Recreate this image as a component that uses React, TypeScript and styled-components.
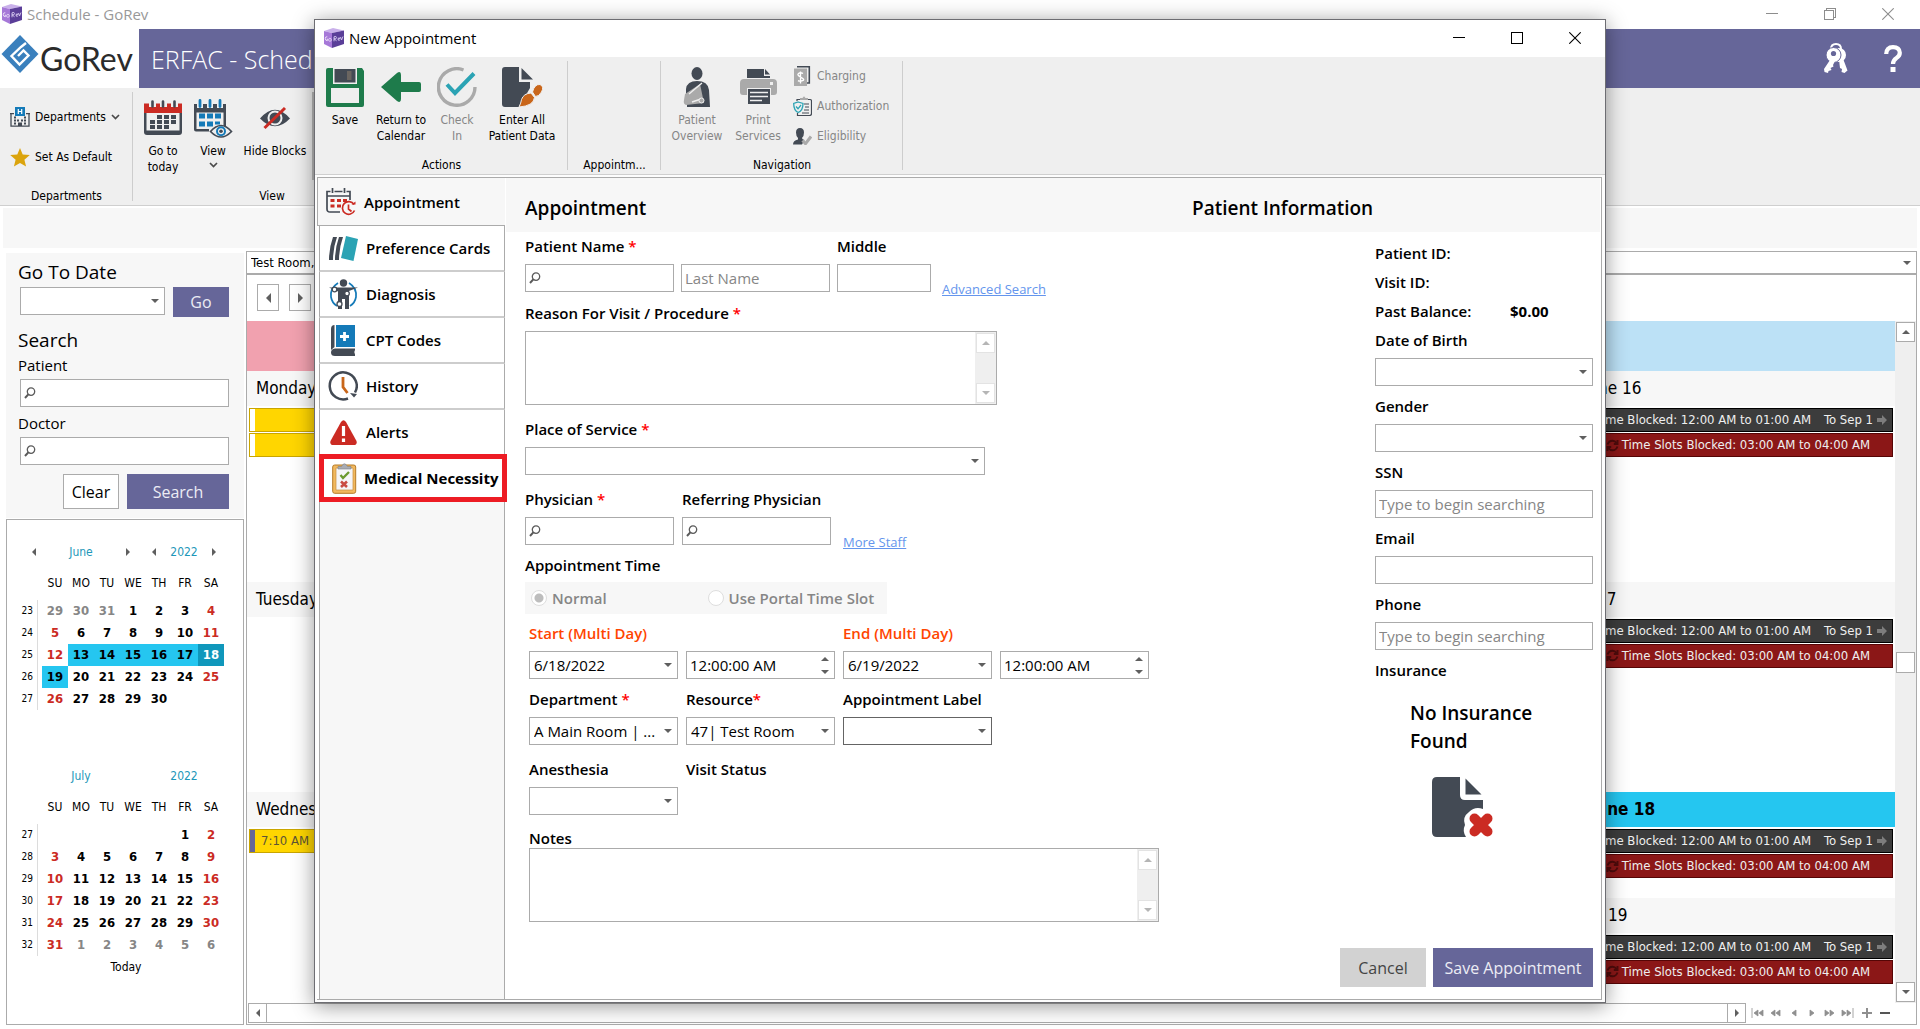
import React from "react";
import styled, { createGlobalStyle, css } from "styled-components";

const ui = `"Open Sans", "Noto Sans", sans-serif`;
const small = `"DejaVu Sans Condensed", "DejaVu Sans", sans-serif`;
const slate = "#434a54";
const purple = "#666699";
const line = "#ababab";
const green = "#1e7b4b";
const blue = "#147ab8";
const red = "#cb2b23";

const GlobalStyle = createGlobalStyle`
  *, *::before, *::after { box-sizing: border-box; }
  body { margin: 0; background: #fff; color: #000; font: 15px/20px ${ui}; overflow: hidden; }
  button, input, select, textarea { font: inherit; color: inherit; margin: 0; border-radius: 0; }
  button { padding: 0; border: 0; background: none; cursor: pointer; }
  h1, h2, p { margin: 0; font-weight: 400; }
  svg { display: block; flex: none; }
`;

/* ---------- shared parts ---------- */

const triangleSides = {
  up: ["top", "bottom"],
  down: ["bottom", "top"],
  left: ["left", "right"],
  right: ["right", "left"],
};

const Triangle = styled.span<{ $dir: keyof typeof triangleSides; $size?: number; $color?: string }>`
  display: block;
  flex: none;
  width: 0;
  height: 0;
  border: ${(p) => p.$size ?? 4}px solid transparent;
  ${(p) => css`
    border-${triangleSides[p.$dir][0]}: 0;
    border-${triangleSides[p.$dir][1]}-color: ${p.$color ?? "#5f5f5f"};
  `}
`;

const SelectFrame = styled.div<{ $width?: number; $dark?: boolean; $height?: number; $font?: string; $size?: number }>`
  display: flex;
  align-items: center;
  flex: none;
  width: ${(p) => (p.$width ? `${p.$width}px` : "100%")};
  height: ${(p) => p.$height ?? 28}px;
  padding-right: 5px;
  border: 1px solid ${(p) => (p.$dark ? "#646464" : line)};
  background: #fff;
  select {
    flex: 1;
    min-width: 0;
    height: 100%;
    padding: 0 0 0 4px;
    border: 0;
    outline: 0;
    appearance: none;
    background: none;
    font-family: ${(p) => p.$font ?? ui};
    font-size: ${(p) => p.$size ?? 15}px;
  }
`;

type PickProps = { id: string; width?: number; value?: string; dark?: boolean };
const Pick = ({ id, width, value = "", dark }: PickProps) => (
  <SelectFrame $width={width} $dark={dark}>
    <select id={id} defaultValue={value}>
      <option value={value}>{value}</option>
    </select>
    <Triangle $dir="down" />
  </SelectFrame>
);

const InputFrame = styled.div<{ $width?: number }>`
  display: flex;
  align-items: center;
  flex: none;
  width: ${(p) => (p.$width ? `${p.$width}px` : "100%")};
  height: 28px;
  padding-left: 3px;
  border: 1px solid ${line};
  background: #fff;
  input {
    flex: 1;
    min-width: 0;
    height: 100%;
    padding: 0;
    border: 0;
    outline: 0;
    background: none;
  }
  input::placeholder { color: #868686; opacity: 1; }
`;

const Magnifier = () => (
  <svg width="12" height="12" viewBox="0 0 12 12" fill="none" stroke="#5a5a5a">
    <circle cx="7" cy="4.600" r="3.700" strokeWidth="1.300" />
    <path d="M4.300 7.300 1 11" strokeWidth="2" />
  </svg>
);

type TextProps = { id: string; width?: number; placeholder?: string; search?: boolean };
const TextBox = ({ id, width, placeholder, search }: TextProps) => (
  <InputFrame $width={width}>
    {search && <Magnifier />}
    <input id={id} type="text" placeholder={placeholder} />
  </InputFrame>
);

const Spinner = styled.span`
  display: flex;
  flex-direction: column;
  gap: 9px;
  padding-right: 5px;
`;

const TimeBox = ({ id, width }: { id: string; width: number }) => (
  <InputFrame $width={width}>
    <input id={id} type="text" defaultValue="12:00:00 AM" aria-label="Time" />
    <Spinner>
      <button type="button" aria-label="Later"><Triangle $dir="up" /></button>
      <button type="button" aria-label="Earlier"><Triangle $dir="down" /></button>
    </Spinner>
  </InputFrame>
);

const BarButton = styled.button<{ $faint?: boolean }>`
  display: flex;
  align-items: center;
  justify-content: center;
  flex: none;
  width: 19px;
  height: 20px;
  border: 1px solid ${(p) => (p.$faint ? "#e3e3e3" : line)};
  background: #fff;
`;

const VerticalBar = styled.div`
  display: flex;
  flex-direction: column;
  align-items: center;
  justify-content: space-between;
  flex: none;
  width: 21px;
  padding: 1px 0;
  background: #efefef;
`;

const AreaFrame = styled.div<{ $width: number }>`
  display: flex;
  width: ${(p) => p.$width}px;
  height: 74px;
  border: 1px solid ${line};
  background: #fff;
  textarea {
    flex: 1;
    min-width: 0;
    padding: 4px;
    border: 0;
    outline: 0;
    resize: none;
    background: none;
  }
`;

const TextArea = ({ id, width }: { id: string; width: number }) => (
  <AreaFrame $width={width}>
    <textarea id={id} />
    <VerticalBar>
      <BarButton $faint type="button" aria-label="Scroll up"><Triangle $dir="up" $color="#b5b5b5" /></BarButton>
      <BarButton $faint type="button" aria-label="Scroll down"><Triangle $dir="down" $color="#b5b5b5" /></BarButton>
    </VerticalBar>
  </AreaFrame>
);

const TitleBar = styled.div<{ $height: number; $muted?: boolean }>`
  display: flex;
  align-items: center;
  flex: none;
  height: ${(p) => p.$height}px;
  padding: 0 ${(p) => (p.$muted ? 3 : 1)}px 2px ${(p) => (p.$muted ? 2 : 9)}px;
  background: #fff;
  color: ${(p) => (p.$muted ? "#999" : "#000")};
  span { flex: 1; padding-left: 5px; }
`;

const Caption = styled.button`
  display: flex;
  align-items: center;
  justify-content: center;
  width: 58px;
  height: 100%;
`;

const Cube = () => (
  <svg width="20" height="20" viewBox="0 0 20 20">
    <path d="M0 3 9 0l11 2.500-12 2.500z" fill="#c9b0ea" />
    <path d="M0 3l8 2v15l-8-4z" fill="#a678d8" />
    <path d="M8 5l12-2.500V16L8 20z" fill="#5a3e98" />
    <path d="M3.300 8.800q-2-.5-2 1.700t2 2.200v-2M5.900 10.300a1.300 1.500 0 1 0 .1 0" fill="none" stroke="#eadcf8" />
    <path d="M10 13.300V8.800q2.600-1 2.600.8t-2.600 1.200l2.600 2M15.800 12.200q-1.800.6-1.800-1t1.600-1.300-1.500 1.400M16.500 9l1 3L19 8.500" fill="none" stroke="#d9cdf2" strokeWidth=".9" />
  </svg>
);

const WindowButtons = ({ color, restore }: { color: string; restore?: boolean }) => (
  <>
    <Caption type="button" aria-label="Minimize">
      <svg width="12" height="12" stroke={color}><path d="M0 5.500h12" /></svg>
    </Caption>
    <Caption type="button" aria-label="Maximize">
      <svg width="12" height="12" fill="none" stroke={color} shapeRendering="crispEdges">
        {restore ? <path d="M.5 2.500h9v9h-9zM2.500 2.500v-2h9v9h-2" /> : <path d="M.5.5h11v11H.5z" />}
      </svg>
    </Caption>
    <Caption type="button" aria-label="Close">
      <svg width="12" height="12" stroke={color} strokeWidth="1.100"><path d="M.3.3l11.400 11.400M11.700.3.3 11.700" /></svg>
    </Caption>
  </>
);

/* ---------- ribbon ---------- */

const Ribbon = styled.div`
  display: flex;
  flex: none;
  height: 118px;
  border-bottom: 1px solid #cfcfcf;
  background: #efefef;
  font: 12px/16px ${small};
`;

const RibbonGroup = styled.section<{ $width: number }>`
  display: flex;
  flex-direction: column;
  flex: none;
  width: ${(p) => p.$width}px;
  background: linear-gradient(#cdcdcd, #cdcdcd) right 4px / 1px 109px no-repeat;
`;

const RibbonItems = styled.div`
  display: flex;
  height: 100px;
  padding-left: 5px;
`;

const GroupName = styled.p`
  text-align: center;
`;

const BigButton = styled.button<{ $width: number }>`
  display: flex;
  flex-direction: column;
  align-items: center;
  flex: none;
  width: ${(p) => p.$width}px;
  padding-top: 9px;
  &:disabled { color: #868686; }
`;

const IconBox = styled.span<{ $width?: number; $height?: number }>`
  display: flex;
  align-items: center;
  justify-content: center;
  flex: none;
  width: ${(p) => p.$width ?? 42}px;
  height: ${(p) => p.$height ?? 42}px;
`;

const BigLabel = styled.span`
  margin-top: 4px;
`;

const SmallList = styled.div<{ $gap: number; $top: number }>`
  display: flex;
  flex-direction: column;
  gap: ${(p) => p.$gap}px;
  padding: ${(p) => p.$top}px 0 0 5px;
`;

const SmallButton = styled.button`
  display: flex;
  align-items: center;
  gap: 5px;
  height: 20px;
  &:disabled { color: #868686; }
`;

const Gallery = styled.div`
  flex: 1;
  height: 88px;
  margin-top: 4px;
  border: 2px solid #b9b9b9;
`;

const Chevron = () => (
  <svg width="9" height="6" viewBox="0 0 9 6" fill="none" stroke="#4a4a4a" strokeWidth="1.700"><path d="M1 1l3.500 3.500L8 1" /></svg>
);

type BigProps = { width: number; icon: React.ReactNode; lines: React.ReactNode[]; disabled?: boolean };
const Big = ({ width, icon, lines, disabled }: BigProps) => (
  <BigButton type="button" $width={width} disabled={disabled}>
    <IconBox>{icon}</IconBox>
    <BigLabel>
      {lines[0]}
      {lines[1] && <><br />{lines[1]}</>}
    </BigLabel>
  </BigButton>
);

/* ---------- drawings ---------- */

const HospitalIcon = () => (
  <svg width="20" height="20" viewBox="0 0 20 20">
    <path d="M1 7v12.200h18V7M0 6.600h4M16 6.600h4" fill="none" stroke={slate} strokeWidth="1.300" />
    <path d="M4 12.500h2v2H4zM7 12.500h2v2H7zM11 12.500h2v2h-2zM14 12.500h2v2h-2zM4 15.500h2v2H4zM14 15.500h2v2h-2zM8 15.500h4V19H8zM4 9.500h2v2H4zM14 9.500h2v2h-2z" fill={slate} />
    <path d="M5 0h10v9H5z" fill={blue} />
    <path d="M8.300 2v5M11.700 2v5M8.300 4.500h3.400" stroke="#fff" strokeWidth="1.200" />
  </svg>
);
const StarIcon = () => (
  <svg width="20" height="19" viewBox="0 0 20 19"><path d="M10 0l2.700 6.600 7.100.5-5.400 4.600 1.700 6.900L10 14.900l-6.100 3.700 1.700-6.900L.2 7.100l7.100-.5z" fill="#dba40d" /></svg>
);
const TodayIcon = () => (
  <svg width="38" height="36" viewBox="0 0 38 36">
    <path d="M0 3.500h38V14H0z" fill={red} />
    <path d="M0 13h38v19q0 3-3 3H3q-3 0-3-3z" fill={slate} />
    <path d="M2.500 13h33v17.500h-33z" fill="#efefef" />
    <path d="M5 0h7v7H5zM16 0h7v7h-7zM27 0h7v7h-7z" fill="#efefef" />
    <path d="M8.500 1.500v5M19 1.500v5M30.500 1.500v5" stroke={slate} strokeWidth="2.600" strokeLinecap="round" />
    <path d="M13 15h5v4h-5zM20 15h5v4h-5zM27 15h5v4h-5zM6 20h5v4H6zM13 20h5v4h-5zM20 20h5v4h-5zM27 20h5v4h-5zM6 25h5v4H6zM13 25h5v4h-5zM20 25h5v4h-5z" fill={slate} />
  </svg>
);
const ViewIcon = () => (
  <svg width="40" height="39" viewBox="0 0 40 39">
    <path d="M1 5h32v22h-2.500V13.500h-27V30H16v2.500H3q-2 0-2-2z" fill={slate} />
    <path d="M4 2h6v7H4zM14 2h6v7h-6zM24 2h6v7h-6z" fill="#efefef" />
    <path d="M7 1.500v6M17 1.500v6M27 1.500v6" stroke={blue} strokeWidth="2.800" strokeLinecap="round" />
    <path d="M6 14.500h6v5H6zM14 14.500h6v5h-6zM22 14.500h6v5h-6zM6 22.500h6v5H6zM14 22.500h6v5h-6zM22 22.500h5v3h-5z" fill={blue} />
    <path d="M17.500 32.500q10.500-12 21 0-10.500 11-21 0z" fill="#efefef" stroke={slate} strokeWidth="1.700" />
    <circle cx="28" cy="32.300" r="4" fill="#efefef" stroke={blue} strokeWidth="2" />
    <circle cx="28" cy="32.300" r="1.800" fill={slate} />
  </svg>
);
const HideIcon = () => (
  <svg width="30" height="24" viewBox="0 0 30 24">
    <path d="M0 12.500Q15-5 30 12.500 15 28 0 12.500z" fill={slate} />
    <circle cx="15" cy="12" r="7.500" fill="#efefef" />
    <circle cx="15" cy="12" r="5.500" fill={slate} />
    <path d="M4.500 22 25 2" stroke={red} strokeWidth="3" />
  </svg>
);
const SaveIcon = () => (
  <svg width="38" height="39" viewBox="0 0 38 39">
    <path d="M2 0h34l2 3v34q0 2-2 2H2q-2 0-2-2V2q0-2 2-2z" fill={green} />
    <path d="M7 0h24v16H7z" fill="#efefef" />
    <path d="M8.500 1h21v13.500h-21z" fill={slate} />
    <path d="M21 3h4.500v9H21z" fill="#6a6560" />
    <path d="M5 20h28v15H5z" fill="#efefef" />
  </svg>
);
const BackIcon = () => (
  <svg width="40" height="30" viewBox="0 0 40 30"><path d="M0 15 16 1q4-2.500 4 2v7h18q2 0 2 2v6q0 2-2 2H20v7q0 4.500-4 2z" fill={green} /></svg>
);
const CheckInIcon = () => (
  <svg width="40" height="40" viewBox="0 0 40 40" fill="none">
    <path d="M26.500 3A18.300 18.300 0 1 0 38 20" stroke="#aaa" strokeWidth="3.400" />
    <path d="M10 17.500l8 8.500L37 6.500" stroke="#2ba3b4" strokeWidth="4" />
  </svg>
);
const EnterIcon = () => (
  <svg width="41" height="40" viewBox="0 0 41 40">
    <path d="M3 0h14v15h11v6L17 40H3q-3 0-3-3V3q0-3 3-3z" fill={slate} />
    <path d="M19.500 1 31 12.500H19.500z" fill={slate} />
    <path d="M30.500 25q2-8 7.500-7.500 4.500 2 1.500 7.500-2.500 4.500-6 4.500zM29 26l3.500 4.500q-1 8.500-15.500 9.500 2-4 2.500-7.500Q21.500 26.500 29 26z" fill="#c9661a" stroke="#efefef" strokeWidth="1" />
  </svg>
);
const PatientIcon = () => (
  <svg width="28" height="40" viewBox="0 0 28 40">
    <ellipse cx="14" cy="6.500" rx="5.500" ry="6.500" fill={slate} />
    <path d="M3 28V22q1-8 11-8 11 0 12 9l1 17H4v-4z" fill={slate} />
    <path d="M17 17 21 36l-18 2q-3-1-2-5l1-6z" fill="#aaa" />
    <path d="M19 16 6 27M9 35l9-3" stroke="#efefef" strokeWidth="1.400" fill="none" />
    <circle cx="18.500" cy="33.500" r="2.500" fill="#aaa" stroke="#efefef" />
  </svg>
);
const PrintIcon = () => (
  <svg width="37" height="36" viewBox="0 0 37 36">
    <path d="M7 0h17v7h6v2H7z" fill={slate} /><path d="M25 0l5 5.500h-5z" fill={slate} />
    <path d="M4 10h29q4 0 4 4v9q0 3-3 3h-3v-7H7v7H3q-3 0-3-3v-9q0-4 4-4z" fill="#aaa" />
    <path d="M30 13h3v3h-3z" fill="#efefef" />
    <path d="M8 20h22v15H8z" fill={slate} />
    <path d="M10 23.500h18M10 27.500h18M10 31.500h12" stroke="#efefef" strokeWidth="1.500" />
  </svg>
);
const ChargingIcon = () => (
  <svg width="19" height="20" viewBox="0 0 19 20">
    <path d="M4 .7h12.300V17H14" fill="none" stroke={slate} strokeWidth="1.600" />
    <path d="M1 2.500h13V20H1z" fill="#aaa" />
    <path d="M10 7.500Q7.500 6 5.500 7.500T8 11.300t1.500 3.300-4.500 0M7.500 5.500v12" fill="none" stroke="#fff" strokeWidth="1.300" />
  </svg>
);
const AuthIcon = () => (
  <svg width="19" height="20" viewBox="0 0 19 20" fill="none">
    <path d="M4 5V3.500h13q1.500 0 1.500 1.500v12.500q0 2-2 2H4.500V17" stroke={slate} strokeWidth="1.200" />
    <path d="M7 4V2h2.500L11 .2 12.500 2H15v2z" fill="#aaa" />
    <path d="M11 8h5M12 11h4M11 14h5M9 17h7" stroke={slate} strokeWidth="1.200" />
    <path d="M5.200 6 10 7.500q0 7-4.800 9-4.500-2-4.500-9z" stroke="#2ba3b4" strokeWidth="1.300" />
    <path d="M3 10.500l2 2.300L8 9" stroke="#2ba3b4" strokeWidth="1.300" />
  </svg>
);
const EligibilityIcon = () => (
  <svg width="19" height="17" viewBox="0 0 19 17">
    <path d="M3 4.500Q3 0 7 0t4 4.500Q11 8 9 10q0 1.500 2.500 2L9 16.500H0Q0 12.500 5 11.500V10Q3 8 3 4.500z" fill={slate} />
    <path d="M9.500 12.500l3 3.200L18 8.500" fill="none" stroke="#aaa" strokeWidth="3" />
  </svg>
);
const KeysIcon = () => (
  <svg width="24" height="31" viewBox="0 0 24 31">
    <path d="M7 6q0-5 5-5t5 5" fill="none" stroke="#fff" strokeWidth="2" />
    <circle cx="15" cy="12" r="7" fill="#fff" />
    <path d="M15 15l4 .5 4.500 12-3 2.500-3-1 .5-3-2-1-.5-4z" fill="#fff" />
    <circle cx="9.500" cy="12" r="7.500" fill="#fff" stroke={purple} />
    <path d="M6 17l5 1-2 4 .5 1.500-3 1.500 1 2-3 1-.5 2-3.500-1L0 26z" fill="#fff" />
    <circle cx="9.500" cy="10.500" r="2.600" fill={purple} />
  </svg>
);
const HelpIcon = () => (
  <svg width="18" height="27" viewBox="0 0 18 27">
    <path d="M2.200 9Q2.200 2.200 9 2.200t6.800 5.600Q15.800 11 12.500 13 9 15.300 9 19" fill="none" stroke="#fff" strokeWidth="4.200" />
    <path d="M6.500 22h5v5h-5z" fill="#fff" />
  </svg>
);
const Diamond = () => (
  <svg width="38" height="38" viewBox="0 0 38 38">
    <path d="M19 0l18.500 19L19 38 .5 19z" fill="#3a80bd" />
    <path d="M25 8 20 12 10.500 21l8 8.500L27.500 20.500 22.500 15.500 17 21" fill="none" stroke="#fff" strokeWidth="2.400" />
  </svg>
);
const ApptIcon = () => (
  <svg width="30" height="30" viewBox="0 0 30 30" fill="none">
    <path d="M14 25H4q-3 0-3-3V4.500h23V13M1 9h23" stroke={slate} strokeWidth="1.700" />
    <path d="M6.500 1v5M18.500 1v5" stroke="#f7f7f7" strokeWidth="4" /><path d="M6.500 1v5M18.500 1v5" stroke={slate} strokeWidth="1.700" />
    <path d="M4.500 12h4v3h-4zM11 12h4v3h-4zM17 12h4v3h-4zM4.500 17.500h4v3h-4zM11 17.500h4v3h-4z" fill={red} />
    <path d="M28 17.500a6.300 6.300 0 1 0 .5 6M22.500 17.500v4.500l3 2.500" stroke={red} strokeWidth="1.700" />
    <path d="M25.500 17.500h4v-3z" fill={red} />
  </svg>
);
const CardsIcon = () => (
  <svg width="30" height="25" viewBox="0 0 30 25">
    <path d="M5 1h4Q5 12 5 24H1Q1 12 5 1zM11 1h4q-4 11-4 23H7Q7 12 11 1z" fill={slate} />
    <path d="M18 0l12 3-4.500 22L13 22z" fill="#2ba3b4" />
  </svg>
);
const DiagnosisIcon = () => (
  <svg width="29" height="31" viewBox="0 0 29 31" fill="none">
    <path d="M9 4Q1 9 2 18q1 6 6 9M20 4q8 5 7 14-1 6-6 9" stroke={blue} strokeWidth="1.700" />
    <circle cx="14.500" cy="4" r="3.700" fill={slate} />
    <path d="M0 8.500h29l-9 3.500v18h-4V20h-3v10H9V12.500z" fill={slate} />
    <g fill="#fff" stroke={slate} strokeWidth="1.300"><circle cx="5.500" cy="10.500" r="2.300" /><circle cx="18" cy="14.500" r="2.300" /><circle cx="10.500" cy="25" r="2.500" /></g>
  </svg>
);
const CodesIcon = () => (
  <svg width="24" height="31" viewBox="0 0 24 31">
    <path d="M5 0h19v22H5z" fill={blue} />
    <path d="M3.500 0v22L0 25V4q0-4 3.500-4z" fill={slate} />
    <path d="M4 23.500h20v1.500q-1.500 2 0 4.500V31H4q-4 0-4-3.500T4 23.500z" fill={slate} />
    <path d="M13.500 7v9M9 11.500h9" stroke="#fff" strokeWidth="2.800" />
  </svg>
);
const HistoryIcon = () => (
  <svg width="30" height="30" viewBox="0 0 30 30" fill="none">
    <path d="M20 27.500A13.500 13.500 0 1 1 27 21.500" stroke={slate} strokeWidth="2.500" />
    <path d="M22 22l7 1-3 3.500z" fill={slate} />
    <path d="M15 6v10l4.500 6" stroke="#c9661a" strokeWidth="2.800" />
  </svg>
);
const AlertIcon = () => (
  <svg width="27" height="25" viewBox="0 0 27 25">
    <path d="M11 2q2.500-3.500 5 0l10.500 19q1 4-3 4h-20q-4 0-3-4z" fill={red} />
    <path d="M13.500 6v10M13.500 18.500v3.500" stroke="#fff" strokeWidth="3.200" />
  </svg>
);
const NecessityIcon = () => (
  <svg width="25" height="31" viewBox="0 0 25 31">
    <rect x=".7" y="2" width="23" height="28.300" rx="2" fill="#f2b95f" stroke="#b57a27" />
    <path d="M4 5h17v22H4z" fill="#f5f5f8" stroke="#c9913f" strokeWidth=".7" />
    <path d="M6 6V3.500h3.500Q12.300-2 15.500 3.500H19V6z" fill="#a9acb3" stroke="#7b7f88" strokeWidth=".6" />
    <path d="M8.500 12l2.500 3 6-6" fill="none" stroke="#6b9a2f" strokeWidth="2.300" />
    <path d="M9 18.500l6 5.500M15 18.500 9 24" stroke="#c94b43" strokeWidth="2.600" />
  </svg>
);
const NoFileIcon = () => (
  <svg width="61" height="60" viewBox="0 0 61 60">
    <path d="M5 0h23v18q0 5 5 5h18v9q-8-3-14 3-7 5-4 13-3 6 1 12H5q-5 0-5-5V5q0-5 5-5z" fill={slate} />
    <path d="M33.500 1.500 49.500 17.500h-16z" fill={slate} />
    <path d="M42.500 41.500l13 13M55.500 41.500l-13 13" stroke={red} strokeWidth="10" strokeLinecap="round" />
  </svg>
);
const RepeatIcon = () => (
  <svg width="13" height="13" viewBox="0 0 13 13" fill="none" stroke="#4d0b0b" strokeWidth="1.900">
    <path d="M1.500 5.500Q3 1.700 6.500 1.700q2.500 0 4 2.300M11.500 7.500Q10 11.300 6.500 11.300q-2.500 0-4-2.300M11.500 1v4H7.800M1.500 12V8h3.700" />
  </svg>
);
const GoArrow = () => (
  <svg width="10" height="10" viewBox="0 0 10 10"><path d="M0 3h5V0l5 5-5 5V7H0z" fill="#7d7d7d" /></svg>
);

/* ---------- page behind the window ---------- */

const Desktop = styled.main`
  position: relative;
  display: flex;
  flex-direction: column;
  height: 100vh;
  min-height: 900px;
`;

const Banner = styled.header`
  display: flex;
  flex: none;
  height: 59px;
`;

const Logo = styled.div`
  display: flex;
  align-items: center;
  flex: none;
  width: 139px;
  padding: 0 0 10px 1px;
  gap: 1px;
  color: #2b2b2b;
  font: 32px/40px Lato, sans-serif;
  span { margin-top: 10px; }
`;

const BannerTitle = styled.div`
  display: flex;
  align-items: center;
  flex: 1;
  gap: 36px;
  padding: 0 18px 0 12px;
  background: ${purple};
  color: #fff;
  h1 { flex: 1; font: 300 25px/34px ${ui}; }
`;

const Strip = styled.div`
  flex: none;
  height: 40px;
  margin: 2px 3px 3px;
  background: #f7f7f7;
`;

const Workspace = styled.div`
  display: flex;
  flex: 1;
  min-height: 0;
  gap: 2px;
  padding: 0 3px 4px 6px;
`;

const Side = styled.aside`
  display: flex;
  flex-direction: column;
  flex: none;
  width: 238px;
  padding-top: 2px;
`;

const Finder = styled.form`
  display: flex;
  flex-direction: column;
  flex: none;
  height: 265px;
  padding: 6px 15px 0 12px;
  background: #f7f7f7;
`;

const FinderRow = styled.div<{ $end?: boolean; $top: number }>`
  display: flex;
  justify-content: ${(p) => (p.$end ? "flex-end" : "flex-start")};
  gap: 8px;
  margin: ${(p) => p.$top}px 0 0 2px;
`;

const FinderHeading = styled.h2<{ $top?: number }>`
  margin-top: ${(p) => p.$top ?? 0}px;
  font-size: 19px;
  line-height: 26px;
`;

const FinderLabel = styled.label<{ $top: number }>`
  margin-top: ${(p) => p.$top}px;
`;

const PushButton = styled.button<{ $width: number; $height: number; $kind: "main" | "plain" | "grey" }>`
  flex: none;
  width: ${(p) => p.$width}px;
  height: ${(p) => p.$height}px;
  font-size: 16px;
  background: ${(p) => ({ main: purple, plain: "#fff", grey: "#d2d2d2" })[p.$kind]};
  color: ${(p) => ({ main: "#ececf4", plain: "#000", grey: "#444" })[p.$kind]};
  border: ${(p) => (p.$kind === "plain" ? `1px solid ${line}` : "0")};
`;

const Calendars = styled.div`
  display: flex;
  flex-direction: column;
  flex: 1;
  margin-top: 1px;
  padding: 20px 0 0 9px;
  border: 1px solid ${line};
  background: #fff;
  font: 12px/22px ${small};
`;

const MonthBar = styled.div<{ $top?: number }>`
  display: flex;
  gap: 22px;
  height: 24px;
  margin: ${(p) => p.$top ?? 0}px 0 8px 16px;
`;

const MonthPart = styled.div<{ $width: number }>`
  display: flex;
  align-items: center;
  justify-content: space-between;
  width: ${(p) => p.$width}px;
  color: #1d97b9;
  span:only-child { margin: 0 auto; }
`;

const MonthGrid = styled.table`
  border-collapse: collapse;
  table-layout: fixed;
  width: 208px;
  th, td { width: 26px; height: 22px; padding: 0; text-align: center; }
  thead th { height: 28px; font-weight: 400; vertical-align: top; }
  td { font-size: 13px; font-weight: 700; }
`;

const WeekNo = styled.th`
  && { font-size: 10px; font-weight: 400; text-align: right; }
  span { display: block; margin-right: 4px; padding-right: 4px; border-right: 1px solid #dcdcdc; }
`;

type Tone = "plain" | "off" | "end" | "range" | "picked";
const Day = styled.td<{ $tone: Tone }>`
  color: ${(p) => ({ plain: "#000", off: "#868686", end: red, range: "#000", picked: "#fff" })[p.$tone]};
  background: ${(p) => ({ plain: "none", off: "none", end: "none", range: "#25c6f0", picked: "#0f97bb" })[p.$tone]};
`;

const TodayButton = styled.button`
  width: 100%;
  padding-right: 7px;
  line-height: 22px;
`;

const weekdays = ["SU", "MO", "TU", "WE", "TH", "FR", "SA"];

type MonthProps = { firstWeek: number; lead: (number | null)[]; days: number; trail: number[]; range?: [number, number]; picked?: number };
const Month = ({ firstWeek, lead, days, trail, range, picked }: MonthProps) => {
  const cells = [
    ...lead.map((n) => ({ n, off: true })),
    ...Array.from({ length: days }, (_, i) => ({ n: i + 1 as number | null, off: false })),
    ...trail.map((n) => ({ n: n as number | null, off: true })),
  ];
  while (cells.length % 7) cells.push({ n: null, off: true });
  const weeks = Array.from({ length: cells.length / 7 }, (_, i) => cells.slice(i * 7, i * 7 + 7));
  const tone = (n: number | null, off: boolean, col: number): Tone => {
    if (off || n === null) return "off";
    if (n === picked) return "picked";
    if (range && n >= range[0] && n <= range[1]) return "range";
    return col === 0 || col === 6 ? "end" : "plain";
  };
  return (
    <MonthGrid>
      <thead>
        <tr><th />{weekdays.map((d) => <th key={d} scope="col">{d}</th>)}</tr>
      </thead>
      <tbody>
        {weeks.map((week, w) => (
          <tr key={w}>
            <WeekNo scope="row"><span>{firstWeek + w}</span></WeekNo>
            {week.map((c, i) => <Day key={i} $tone={tone(c.n, c.off, i)}>{c.n}</Day>)}
          </tr>
        ))}
      </tbody>
    </MonthGrid>
  );
};

const Scheduler = styled.section`
  display: flex;
  flex-direction: column;
  flex: 1;
  min-width: 0;
`;

const Board = styled.div`
  display: flex;
  flex-direction: column;
  flex: 1;
  min-height: 0;
  margin-top: -1px;
  border: 1px solid ${line};
  border-top-width: 2px;
  background: #fff;
`;

const BoardNav = styled.div`
  display: flex;
  gap: 10px;
  flex: none;
  height: 46px;
  padding: 9px 0 0 10px;
`;

const NavButton = styled.button`
  display: flex;
  align-items: center;
  justify-content: center;
  width: 22px;
  height: 27px;
  border: 1px solid ${line};
`;

const BoardMain = styled.div`
  display: flex;
  flex: 1;
  min-height: 0;
`;

const Resource = styled.div`
  display: flex;
  flex-direction: column;
  flex: 1;
  min-width: 0;
`;

const ResourceBand = styled.div<{ $color: string }>`
  flex: none;
  height: 50px;
  background: ${(p) => p.$color};
`;

const WeekColumns = styled.div`
  display: flex;
  flex: 1;
  min-height: 0;
`;

const WeekColumn = styled.div`
  display: flex;
  flex-direction: column;
  flex: 1;
  min-width: 0;
`;

const DayBox = styled.div<{ $share: number }>`
  flex: ${(p) => p.$share} 1 0;
  min-height: 0;
`;

const DayName = styled.p<{ $today?: boolean; $inset?: boolean }>`
  height: 35px;
  padding-left: ${(p) => (p.$inset ? 20 : 9)}px;
  background: ${(p) => (p.$today ? "#25c6f0" : "#f7f7f7")};
  font: ${(p) => (p.$today ? 700 : 400)} 17px/35px ${small};
`;

const entryColors = {
  dark: ["#3c3c3c", "#000"],
  red: ["#8b1717", "#560505"],
  yellow: ["#ffd600", "#c9a500"],
};

const Entry = styled.div<{ $kind: keyof typeof entryColors; $mark?: string }>`
  display: flex;
  align-items: center;
  justify-content: ${(p) => (p.$kind === "yellow" ? "flex-start" : "flex-end")};
  gap: 3px;
  height: 24px;
  margin: 1px 2px 0;
  padding-right: ${(p) => (p.$kind === "red" ? 22 : 5)}px;
  border: 1px solid ${(p) => entryColors[p.$kind][1]};
  background: ${(p) => entryColors[p.$kind][0]};
  color: ${(p) => (p.$kind === "yellow" ? "#5c5437" : "#efefef")};
  font: 13px/22px ${small};
  white-space: nowrap;
  ${(p) => p.$mark && css`&::before { content: ""; width: 5px; height: 100%; margin-right: 3px; background: ${p.$mark}; }`}
  ${DayName} + & { margin-top: 2px; }
  span + span { margin: 0 1px 0 10px; }
`;

const Blocked = () => (
  <>
    <Entry $kind="dark">
      <RepeatIcon />
      <span>Time Blocked: 12:00 AM to 01:00 AM</span>
      <span>To Sep 1</span>
      <GoArrow />
    </Entry>
    <Entry $kind="red">
      <RepeatIcon />
      <span>Time Slots Blocked: 03:00 AM to 04:00 AM</span>
    </Entry>
  </>
);

const Thumb = styled.span`
  width: 19px;
  height: 21px;
  border: 1px solid ${line};
  background: #fff;
`;

const BottomBar = styled.div`
  display: flex;
  align-items: center;
  flex: none;
  height: 21px;
  padding: 0 23px 1px 1px;
`;

const Track = styled.div`
  flex: 1;
  height: 20px;
  margin: 0 -1px;
  border: 1px solid ${line};
`;

const Pager = styled.div`
  display: flex;
  align-items: center;
  justify-content: space-between;
  width: 147px;
  padding-left: 3px;
`;

const PagerButton = styled.button`
  display: flex;
  align-items: center;
  justify-content: center;
  width: 16px;
  height: 18px;
`;

const pager: [string, string][] = [
  ["First", "M2 1v10M8 3v6L4 6zM13 3v6L9 6z"],
  ["Back page", "M7 3v6L3 6zM12 3v6L8 6z"],
  ["Back", "M9 3v6L5 6z"],
  ["Next", "M5 3v6l4-3z"],
  ["Forward page", "M2 3v6l4-3zM7 3v6l4-3z"],
  ["Last", "M1 3v6l4-3zM6 3v6l4-3zM12 1v10"],
];

/* ---------- appointment window ---------- */

const Dialog = styled.div`
  position: absolute;
  inset: 19px 314px 26px;
  display: flex;
  flex-direction: column;
  border: 1px solid #6d6d72;
  background: #fdfdfd;
  box-shadow: 0 3px 20px rgba(0, 0, 0, 0.42);
`;

const Sheet = styled.div`
  display: flex;
  flex: 1;
  min-height: 0;
  margin: 2px 3px 2px 2px;
  border: solid ${line};
  border-width: 1px 1px 1px 0;
  background: #fff;
`;

const Tabs = styled.nav`
  display: flex;
  flex-direction: column;
  flex: none;
  width: 188px;
`;

const TabsRest = styled.div`
  flex: 1;
  margin-left: 2px;
  border: solid ${line};
  border-width: 0 1px 0 1px;
  background: #f7f7f7;
`;

const Tab = styled.button<{ $look?: "current" | "flagged" }>`
  display: flex;
  align-items: center;
  flex: none;
  gap: 8px;
  height: 46px;
  margin-left: 2px;
  padding-left: 8px;
  border: solid ${line};
  border-width: 0 1px 2px 1px;
  border-bottom-color: #cdcdcd;
  background: #fff;
  font-weight: 600;
  text-align: left;
  white-space: nowrap;
  ${(p) => p.$look === "current" && css`
    height: 48px;
    margin-left: 0;
    border-width: 0 0 1px 1px;
    border-bottom-color: ${line};
    background: #f7f7f7;
  `}
  ${(p) => p.$look === "flagged" && css`
    z-index: 1;
    height: 48px;
    margin: -2px -2px 0 2px;
    padding-left: 5px;
    gap: 5px;
    border: 5px solid #ed1c24;
    font-weight: 700;
  `}
`;

const Content = styled.div`
  display: flex;
  flex-direction: column;
  flex: 1;
  min-width: 0;
`;

const Headings = styled.div`
  display: flex;
  align-items: center;
  flex: none;
  height: 54px;
  margin: 0 1px;
  padding: 5px 0 0 19px;
  background: #f7f7f7;
  h2 { flex: 1; font-size: 19px; font-weight: 600; line-height: 26px; }
  h2 + h2 { flex: 0 0 408px; }
`;

const Columns = styled.div`
  display: flex;
  flex: 1;
  min-height: 0;
`;

const Form = styled.form`
  flex: 1;
  min-width: 0;
  padding: 4px 0 0 20px;
`;

const Lower = styled.div`
  padding-left: 4px;
`;

const Fields = styled.div<{ $top?: number; $gap?: number }>`
  display: flex;
  align-items: flex-end;
  gap: ${(p) => p.$gap ?? 8}px;
  margin-top: ${(p) => p.$top ?? 0}px;
`;

const Field = styled.div<{ $tight?: boolean }>`
  display: flex;
  flex-direction: column;
  align-self: flex-start;
  gap: ${(p) => (p.$tight ? 0 : 8)}px;
`;

const FieldLabel = styled.label<{ $hot?: boolean }>`
  min-height: 20px;
  font-weight: 600;
  white-space: nowrap;
  color: ${(p) => (p.$hot ? "#ff4500" : "inherit")};
`;

const Star = styled.span`
  color: #f00;
`;

const TextLink = styled.a`
  margin: 0 0 -7px 4px;
  color: #6495ed;
  font-size: 13px;
`;

const Choices = styled.div`
  display: flex;
  gap: 101px;
  width: 362px;
  height: 32px;
  padding: 0 6px;
  margin-top: 7px;
  background: #f7f7f7;
  label { display: flex; align-items: center; gap: 5px; color: #868686; font-weight: 600; }
  input {
    appearance: none;
    width: 16px;
    height: 16px;
    border: 1px solid #dedede;
    border-radius: 50%;
    background: #fff;
  }
  input:checked { background: radial-gradient(circle, #bdbdbd 0 4px, #fff 5px); }
`;

const Facts = styled.div`
  display: flex;
  flex-direction: column;
  flex: 0 0 409px;
  padding: 11px 8px 12px 0;
`;

const FactFields = styled.div`
  display: flex;
  flex-direction: column;
  gap: 10px;
  align-self: flex-end;
  width: 218px;
`;

const FactRow = styled.p`
  display: grid;
  grid-template-columns: 135px 1fr;
  font-weight: 600;
  line-height: 20px;
  & + & { margin-top: -1px; }
  & + div { margin-top: -1px; }
  b { font-weight: 700; }
`;

const NoInsurance = styled.div`
  margin: 9px 0 0 35px;
  p { width: 132px; font-size: 19px; font-weight: 600; line-height: 28px; }
  svg { margin: 22px 0 0 22px; }
`;

const Footer = styled.div`
  display: flex;
  justify-content: flex-end;
  gap: 7px;
  margin-top: auto;
`;

const TabIcon = ({ children }: { children: React.ReactNode }) => <IconBox $width={30} $height={32}>{children}</IconBox>;

export default function App() {
  return (
    <>
      <GlobalStyle />
      <Desktop>
        <TitleBar $height={29} $muted>
          <Cube />
          <span>Schedule - GoRev</span>
          <WindowButtons color="#8d8d8d" restore />
        </TitleBar>
        <Banner>
          <Logo><Diamond /><span>GoRev</span></Logo>
          <BannerTitle>
            <h1>ERFAC - Schedule</h1>
            <button type="button" aria-label="Keys"><KeysIcon /></button>
            <button type="button" aria-label="Help"><HelpIcon /></button>
          </BannerTitle>
        </Banner>
        <Ribbon>
          <RibbonGroup $width={133}>
            <RibbonItems>
              <SmallList $gap={20} $top={19}>
                <SmallButton type="button"><HospitalIcon /><span>Departments</span><Chevron /></SmallButton>
                <SmallButton type="button"><StarIcon /><span>Set As Default</span></SmallButton>
              </SmallList>
            </RibbonItems>
            <GroupName>Departments</GroupName>
          </RibbonGroup>
          <RibbonGroup $width={278}>
            <RibbonItems>
              <Big width={50} icon={<TodayIcon />} lines={["Go to", "today"]} />
              <Big width={50} icon={<ViewIcon />} lines={["View", <IconBox key="more" $width={26} $height={12}><Chevron /></IconBox>]} />
              <Big width={74} icon={<HideIcon />} lines={["Hide Blocks"]} />
              <Gallery />
            </RibbonItems>
            <GroupName>View</GroupName>
          </RibbonGroup>
        </Ribbon>
        <Strip />
        <Workspace>
          <Side>
            <Finder>
              <FinderHeading><label htmlFor="go-date">Go To Date</label></FinderHeading>
              <FinderRow $top={2}>
                <Pick id="go-date" width={145} />
                <PushButton type="button" $kind="main" $width={56} $height={30}>Go</PushButton>
              </FinderRow>
              <FinderHeading $top={10}>Search</FinderHeading>
              <FinderLabel $top={2} htmlFor="find-patient">Patient</FinderLabel>
              <FinderRow $top={4}><TextBox id="find-patient" search /></FinderRow>
              <FinderLabel $top={6} htmlFor="find-doctor">Doctor</FinderLabel>
              <FinderRow $top={4}><TextBox id="find-doctor" search /></FinderRow>
              <FinderRow $top={9} $end>
                <PushButton type="reset" $kind="plain" $width={56} $height={35}>Clear</PushButton>
                <PushButton type="button" $kind="main" $width={102} $height={35}>Search</PushButton>
              </FinderRow>
            </Finder>
            <Calendars>
              <MonthBar>
                <MonthPart $width={98}>
                  <button type="button" aria-label="Previous month"><Triangle $dir="left" /></button>
                  <span>June</span>
                  <button type="button" aria-label="Next month"><Triangle $dir="right" /></button>
                </MonthPart>
                <MonthPart $width={64}>
                  <button type="button" aria-label="Previous year"><Triangle $dir="left" /></button>
                  <span>2022</span>
                  <button type="button" aria-label="Next year"><Triangle $dir="right" /></button>
                </MonthPart>
              </MonthBar>
              <Month firstWeek={23} lead={[29, 30, 31]} days={30} trail={[]} range={[13, 19]} picked={18} />
              <MonthBar $top={54}>
                <MonthPart $width={98}><span>July</span></MonthPart>
                <MonthPart $width={64}><span>2022</span></MonthPart>
              </MonthBar>
              <Month firstWeek={27} lead={[null, null, null, null, null]} days={31} trail={[1, 2, 3, 4, 5, 6]} />
              <TodayButton type="button">Today</TodayButton>
            </Calendars>
          </Side>
          <Scheduler>
            <SelectFrame $height={23} $font={small} $size={13}>
              <select aria-label="Rooms" defaultValue="rooms"><option value="rooms">Test Room, Main Room</option></select>
              <Triangle $dir="down" />
            </SelectFrame>
            <Board>
              <BoardNav>
                <NavButton type="button" aria-label="Previous week"><Triangle $dir="left" $size={5} /></NavButton>
                <NavButton type="button" aria-label="Next week"><Triangle $dir="right" $size={5} /></NavButton>
              </BoardNav>
              <BoardMain>
                <Resource>
                  <ResourceBand $color="#f1a1af" />
                  <WeekColumns>
                    <WeekColumn>
                      <DayBox $share={2}>
                        <DayName>Monday</DayName>
                        <Entry $kind="yellow" $mark="#fff" />
                        <Entry $kind="yellow" $mark="#fff" />
                      </DayBox>
                      <DayBox $share={2}><DayName>Tuesday</DayName></DayBox>
                      <DayBox $share={2}>
                        <DayName>Wednesday</DayName>
                        <Entry $kind="yellow" $mark={purple}><span>7:10 AM</span></Entry>
                      </DayBox>
                    </WeekColumn>
                    <WeekColumn />
                  </WeekColumns>
                </Resource>
                <Resource>
                  <ResourceBand $color="#bce1f6" />
                  <WeekColumns>
                    <WeekColumn />
                    <WeekColumn>
                      <DayBox $share={2}><DayName $inset>Thursday, June 16</DayName><Blocked /></DayBox>
                      <DayBox $share={2}><DayName $inset>Friday, June 17</DayName><Blocked /></DayBox>
                      <DayBox $share={1}><DayName $inset $today>Saturday, June 18</DayName><Blocked /></DayBox>
                      <DayBox $share={1}><DayName $inset>Sunday, June 19</DayName><Blocked /></DayBox>
                    </WeekColumn>
                  </WeekColumns>
                </Resource>
                <VerticalBar>
                  <BarButton type="button" aria-label="Scroll up"><Triangle $dir="up" /></BarButton>
                  <Thumb />
                  <BarButton type="button" aria-label="Scroll down"><Triangle $dir="down" /></BarButton>
                </VerticalBar>
              </BoardMain>
              <BottomBar>
                <BarButton type="button" aria-label="Scroll left"><Triangle $dir="left" /></BarButton>
                <Track />
                <BarButton type="button" aria-label="Scroll right"><Triangle $dir="right" /></BarButton>
                <Pager>
                  {pager.map(([name, d]) => (
                    <PagerButton key={name} type="button" aria-label={name}>
                      <svg width="14" height="12" viewBox="0 0 14 12" fill="#8f8f8f" stroke="#8f8f8f" strokeWidth=".8"><path d={d} /></svg>
                    </PagerButton>
                  ))}
                  <PagerButton type="button" aria-label="Zoom in">
                    <svg width="12" height="12" stroke="#8f8f8f" strokeWidth="2"><path d="M1 6h10M6 1v10" /></svg>
                  </PagerButton>
                  <PagerButton type="button" aria-label="Zoom out">
                    <svg width="12" height="12" stroke="#555" strokeWidth="2"><path d="M1 6h10" /></svg>
                  </PagerButton>
                </Pager>
              </BottomBar>
            </Board>
          </Scheduler>
        </Workspace>

        <Dialog role="dialog" aria-label="New Appointment">
          <TitleBar $height={37}>
            <Cube />
            <span>New Appointment</span>
            <WindowButtons color="#000" />
          </TitleBar>
          <Ribbon>
            <RibbonGroup $width={253}>
              <RibbonItems>
                <Big width={50} icon={<SaveIcon />} lines={["Save"]} />
                <Big width={62} icon={<BackIcon />} lines={["Return to", "Calendar"]} />
                <Big width={50} icon={<CheckInIcon />} lines={["Check", "In"]} disabled />
                <Big width={80} icon={<EnterIcon />} lines={["Enter All", "Patient Data"]} />
              </RibbonItems>
              <GroupName>Actions</GroupName>
            </RibbonGroup>
            <RibbonGroup $width={93}>
              <RibbonItems />
              <GroupName>Appointm...</GroupName>
            </RibbonGroup>
            <RibbonGroup $width={242}>
              <RibbonItems>
                <Big width={62} icon={<PatientIcon />} lines={["Patient", "Overview"]} disabled />
                <Big width={60} icon={<PrintIcon />} lines={["Print", "Services"]} disabled />
                <SmallList $gap={10} $top={9}>
                  <SmallButton type="button" disabled><ChargingIcon /><span>Charging</span></SmallButton>
                  <SmallButton type="button" disabled><AuthIcon /><span>Authorization</span></SmallButton>
                  <SmallButton type="button" disabled><EligibilityIcon /><span>Eligibility</span></SmallButton>
                </SmallList>
              </RibbonItems>
              <GroupName>Navigation</GroupName>
            </RibbonGroup>
          </Ribbon>
          <Sheet>
            <Tabs>
              <Tab type="button" $look="current"><TabIcon><ApptIcon /></TabIcon>Appointment</Tab>
              <Tab type="button"><TabIcon><CardsIcon /></TabIcon>Preference Cards</Tab>
              <Tab type="button"><TabIcon><DiagnosisIcon /></TabIcon>Diagnosis</Tab>
              <Tab type="button"><TabIcon><CodesIcon /></TabIcon>CPT Codes</Tab>
              <Tab type="button"><TabIcon><HistoryIcon /></TabIcon>History</Tab>
              <Tab type="button"><TabIcon><AlertIcon /></TabIcon>Alerts</Tab>
              <Tab type="button" $look="flagged"><TabIcon><NecessityIcon /></TabIcon>Medical Necessity</Tab>
              <TabsRest />
            </Tabs>
            <Content>
              <Headings>
                <h2>Appointment</h2>
                <h2>Patient Information</h2>
              </Headings>
              <Columns>
                <Form>
                  <Fields $gap={7}>
                    <Field><FieldLabel htmlFor="first">Patient Name <Star>*</Star></FieldLabel><TextBox id="first" width={149} search /></Field>
                    <TextBox id="last" width={149} placeholder="Last Name" />
                    <Field><FieldLabel htmlFor="middle">Middle</FieldLabel><TextBox id="middle" width={94} /></Field>
                    <TextLink href="#search">Advanced Search</TextLink>
                  </Fields>
                  <Fields $top={11}>
                    <Field><FieldLabel htmlFor="reason">Reason For Visit / Procedure <Star>*</Star></FieldLabel><TextArea id="reason" width={472} /></Field>
                  </Fields>
                  <Fields $top={14}>
                    <Field><FieldLabel htmlFor="place">Place of Service <Star>*</Star></FieldLabel><Pick id="place" width={460} /></Field>
                  </Fields>
                  <Fields $top={14}>
                    <Field><FieldLabel htmlFor="physician">Physician <Star>*</Star></FieldLabel><TextBox id="physician" width={149} search /></Field>
                    <Field><FieldLabel htmlFor="referring">Referring Physician</FieldLabel><TextBox id="referring" width={149} search /></Field>
                    <TextLink href="#staff">More Staff</TextLink>
                  </Fields>
                  <Fields $top={10}><FieldLabel as="span">Appointment Time</FieldLabel></Fields>
                  <Choices role="radiogroup" aria-label="Appointment Time">
                    <label><input type="radio" name="slot" defaultChecked disabled />Normal</label>
                    <label><input type="radio" name="slot" disabled />Use Portal Time Slot</label>
                  </Choices>
                  <Lower>
                    <Fields $top={9}>
                      <Field><FieldLabel $hot htmlFor="start">Start (Multi Day)</FieldLabel><Pick id="start" width={149} value="6/18/2022" /></Field>
                      <TimeBox id="start-time" width={149} />
                      <Field><FieldLabel $hot htmlFor="end">End (Multi Day)</FieldLabel><Pick id="end" width={149} value="6/19/2022" /></Field>
                      <TimeBox id="end-time" width={149} />
                    </Fields>
                    <Fields $top={10}>
                      <Field><FieldLabel htmlFor="department">Department <Star>*</Star></FieldLabel><Pick id="department" width={149} value="A Main Room | ..." /></Field>
                      <Field><FieldLabel htmlFor="resource">Resource<Star>*</Star></FieldLabel><Pick id="resource" width={149} value="47| Test Room" /></Field>
                      <Field><FieldLabel htmlFor="tag">Appointment Label</FieldLabel><Pick id="tag" width={149} dark /></Field>
                    </Fields>
                    <Fields $top={14}>
                      <Field><FieldLabel htmlFor="anesthesia">Anesthesia</FieldLabel><Pick id="anesthesia" width={149} /></Field>
                      <Field><FieldLabel as="span">Visit Status</FieldLabel></Field>
                    </Fields>
                    <Fields $top={13}>
                      <Field $tight><FieldLabel htmlFor="notes">Notes</FieldLabel><TextArea id="notes" width={630} /></Field>
                    </Fields>
                  </Lower>
                </Form>
                <Facts>
                  <FactFields>
                    <FactRow>Patient ID:</FactRow>
                    <FactRow>Visit ID:</FactRow>
                    <FactRow>Past Balance: <b>$0.00</b></FactRow>
                    <Field><FieldLabel htmlFor="birth">Date of Birth</FieldLabel><Pick id="birth" width={218} /></Field>
                    <Field><FieldLabel htmlFor="gender">Gender</FieldLabel><Pick id="gender" width={218} /></Field>
                    <Field><FieldLabel htmlFor="ssn">SSN</FieldLabel><TextBox id="ssn" width={218} placeholder="Type to begin searching" /></Field>
                    <Field><FieldLabel htmlFor="email">Email</FieldLabel><TextBox id="email" width={218} /></Field>
                    <Field><FieldLabel htmlFor="phone">Phone</FieldLabel><TextBox id="phone" width={218} placeholder="Type to begin searching" /></Field>
                    <FieldLabel as="span">Insurance</FieldLabel>
                    <NoInsurance>
                      <p>No Insurance Found</p>
                      <NoFileIcon />
                    </NoInsurance>
                  </FactFields>
                  <Footer>
                    <PushButton type="button" $kind="grey" $width={86} $height={39}>Cancel</PushButton>
                    <PushButton type="button" $kind="main" $width={160} $height={39}>Save Appointment</PushButton>
                  </Footer>
                </Facts>
              </Columns>
            </Content>
          </Sheet>
        </Dialog>
      </Desktop>
    </>
  );
}
